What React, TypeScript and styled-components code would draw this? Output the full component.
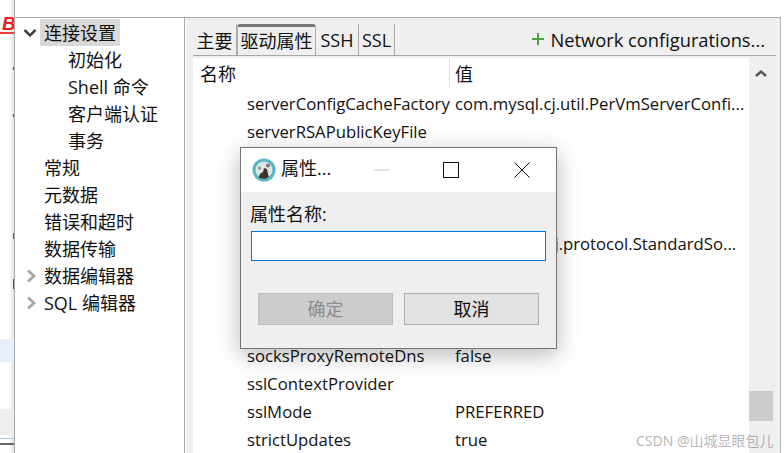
import React from "react";
import styled, { createGlobalStyle } from "styled-components";

const Global = createGlobalStyle`
  html, body { margin: 0; padding: 0; background: #fff; }
  body { font-family: "Open Sans", "Noto Sans CJK SC", sans-serif; color: #111; }
`;
const cjk = `"Open Sans", "Noto Sans CJK SC", sans-serif`;

const Page = styled.div`
  position: relative; width: 784px; height: 453px; overflow: hidden;
  display: flex; background: #fff; font-family: ${cjk}; font-size: 17px;
`;
const Strip = styled.div`
  width: 14px; flex: none; display: flex; flex-direction: column; overflow: hidden;
  background: linear-gradient(90deg, #fff 0 9px, #e4e4e4 14px);
`;
const BrandMark = styled.div`
  margin-top: 15px; height: 19px; width: 14px; overflow: hidden; box-sizing: border-box;
  border-bottom: 2px solid #f03a3a; color: #f02020; font: italic bold 19px/18px "Liberation Sans", sans-serif;
  padding-left: 2px;
`;
const Dot = styled.div<{ $top: number; $h?: number }>`
  margin-top: ${p => p.$top}px; margin-left: 13px; width: 2px; height: ${p => p.$h ?? 3}px;
  background: #8a4a20; flex: none;
`;
const Hl = styled.div`
  margin-top: 50px; height: 23px; background: #e5effa; flex: none;
`;
const GrayBand = styled.div`
  margin-top: 47px; height: 26px; background: #eeeeee; flex: none;
`;
const BlueLine = styled.div`
  margin-top: 3px; height: 1px; background: #a9c4e6; flex: none;
`;
const DarkLine = styled.div`
  margin-top: 4px; height: 2px; background: #666; flex: none;
`;
const Window = styled.div`
  flex: 1; display: flex; flex-direction: column; min-width: 0;
  border-left: 1px solid #a8a8a8;
`;
const TopBar = styled.div`
  height: 17px; flex: none; background: #fff; margin-right: 3px;
  border-bottom: 1px solid #a6a6a6;
`;
const Body = styled.div`
  flex: 1; display: flex; min-height: 0; margin-right: 3px; border-right: 1px solid #b4b4b4;
`;
const Tree = styled.div`
  width: 170px; flex: none; box-sizing: border-box; padding-top: 1px; background: #fff;
  border-right: 1px solid #a8a8a8; display: flex; flex-direction: column;
`;
const TreeRow = styled.div`
  height: 27px; display: flex; align-items: center; flex: none; padding-left: 8px;
`;
const Twisty = styled.span`
  width: 17px; flex: none; display: flex; align-items: center; justify-content: flex-start;
`;
const TreeLabel = styled.span<{ $selected?: boolean; $indent?: boolean }>`
  height: 27px; line-height: 28px; white-space: nowrap; font-size: 18px;
  margin-left: ${p => (p.$indent ? 24 : 0)}px;
  padding: 0 4px;
  ${p => (p.$selected ? "background: #d9d9d9;" : "")}
`;
const Panel = styled.div`
  flex: 1; min-width: 0; background: #efefef; display: flex; flex-direction: column;
  padding-left: 7px; margin-left: 1px;
`;
const Tabs = styled.div`
  height: 38px; flex: none; display: flex; align-items: flex-end; box-sizing: border-box;
  border-bottom: 1px solid #a9a9a9; margin-right: 4px;
`;
const Tab = styled.div<{ $active?: boolean; $w: number }>`
  width: ${p => p.$w}px; height: 31px; box-sizing: border-box; flex: none;
  display: flex; align-items: center; justify-content: center; font-size: 18px;
  border-right: 1px solid #a9a9a9; white-space: nowrap;
  ${p => (p.$active ? "border-left: 1px solid #a9a9a9; border-top: 3px solid #777; border-radius: 3px 3px 0 0; padding-bottom: 2px;" : "")}
`;
const TabLink = styled.div`
  margin-left: auto; margin-right: 11px; display: flex; align-items: center; gap: 7px;
  height: 28px; margin-bottom: 2px; font-size: 18.3px; white-space: nowrap;
`;
const TableWrap = styled.div`
  margin-top: 2px; flex: 1; display: flex; min-height: 0;
`;
const Table = styled.div`
  width: 556px; flex: none; background: #fff; overflow: hidden;
`;
const Head = styled.div`
  display: grid; grid-template-columns: 256px 1fr; height: 31px;
`;
const HeadCell = styled.div`
  font-size: 18px; line-height: 32px; padding-left: 7px; box-sizing: border-box; height: 30px;
  & + & { border-left: 1px solid #e2e2e2; padding-left: 5px; }
`;
const Row = styled.div`
  display: grid; grid-template-columns: 54px 208px 1fr; height: 28px; align-items: center;
  font-size: 16.7px; white-space: nowrap;
`;
const Value = styled.span<{ $nudge?: number }>`
  margin-left: ${p => p.$nudge ?? 0}px;
`;
const Scroll = styled.div`
  flex: 1; position: relative; display: flex; flex-direction: column; align-items: flex-start;
`;
const ScrollUp = styled.div`
  width: 24px; height: 30px; display: flex; align-items: center; justify-content: center;
`;
const Thumb = styled.div`
  margin-top: 303px; width: 24px; height: 30px; background: #cccccc;
`;
const Dialog = styled.div`
  position: absolute; left: 240px; top: 147px; width: 317px; height: 202px; box-sizing: border-box;
  border: 1px solid #747474; background: #efefef; display: flex; flex-direction: column;
  box-shadow: 0 6px 22px rgba(0,0,0,.28);
`;
const TitleBar = styled.div`
  height: 44px; flex: none; background: #fff; display: flex; align-items: center; padding-left: 11px;
`;
const TitleText = styled.span`
  font-size: 18px; line-height: 40px; height: 44px; margin-left: 5px; width: 92px; white-space: nowrap;
`;
const WinBtn = styled.div<{ $w: number }>`
  width: ${p => p.$w}px; flex: none; display: flex; align-items: center; justify-content: center;
`;
const DialogBody = styled.div`
  flex: 1; padding: 9px 10px 0; display: flex; flex-direction: column;
`;
const FieldLabel = styled.div`
  font-size: 18px; line-height: 27px; height: 30px; margin-left: -1px;
`;
const Input = styled.div`
  height: 30px; width: 295px; box-sizing: border-box; background: #fff; border: 1px solid #0078d7;
`;
const Buttons = styled.div`
  margin-top: 32px; margin-left: 7px; display: flex; gap: 11px;
`;
const Btn = styled.div<{ $disabled?: boolean }>`
  width: 135px; height: 32px; box-sizing: border-box; display: flex; align-items: center; justify-content: center;
  font-size: 18px; padding-bottom: 2px;
  ${p => (p.$disabled
    ? "background:#cccccc; border:1px solid #bfbfbf; color:#8d8d8d;"
    : "background:#e1e2e3; border:1px solid #adadad; color:#111;")}
`;
const Watermark = styled.div`
  position: absolute; left: 636px; top: 431px; font-size: 14px; line-height: 19px; color: rgba(120,120,120,.55);
  white-space: nowrap; font-family: "Noto Sans", "Noto Sans CJK SC", sans-serif;
`;

const Down = () => (
  <svg width="14" height="10" viewBox="0 0 14 10"><path d="M1.5 2 7 7.5 12.5 2" fill="none" stroke="#444" strokeWidth="2.6" /></svg>
);
const Right = () => (
  <svg width="12" height="14" viewBox="0 0 12 14" style={{ marginLeft: 2 }}><path d="M3 1.5 9 7 3 12.5" fill="none" stroke="#a6a6a6" strokeWidth="2.8" /></svg>
);
const Up = () => (
  <svg width="12" height="9" viewBox="0 0 12 9"><path d="M1 7 6 2.5 11 7" fill="none" stroke="#555" strokeWidth="2.4" /></svg>
);
const Plus = () => (
  <svg width="12" height="12" viewBox="0 0 12 12"><path d="M6 0v12M0 6h12" stroke="#4d9f42" strokeWidth="2" /></svg>
);
const AppIcon = () => (
  <svg width="24" height="24" viewBox="0 0 24 24">
    <circle cx="12" cy="12" r="11.5" fill="#55b8c2" />
    <circle cx="12" cy="12" r="8.5" fill="#dfe6e6" />
    <path d="M7 20c0-4 2-5 4-6l1-4 3 1 1 5 1 3-4 2z" fill="#3c3430" />
    <circle cx="16" cy="7.5" r="2" fill="#777" />
    <circle cx="7.5" cy="10" r="1.6" fill="#8a8a8a" />
  </svg>
);

const tree: { label: string; indent?: boolean; twisty?: "down" | "right"; selected?: boolean }[] = [
  { label: "连接设置", twisty: "down", selected: true },
  { label: "初始化", indent: true },
  { label: "Shell 命令", indent: true },
  { label: "客户端认证", indent: true },
  { label: "事务", indent: true },
  { label: "常规" },
  { label: "元数据" },
  { label: "错误和超时" },
  { label: "数据传输" },
  { label: "数据编辑器", twisty: "right" },
  { label: "SQL 编辑器", twisty: "right" },
];

const rows: [string, string, number?][] = [
  ["serverConfigCacheFactory", "com.mysql.cj.util.PerVmServerConfi..."],
  ["serverRSAPublicKeyFile", ""],
  ["serverTimezone", ""],
  ["sessionVariables", ""],
  ["slowQueryThresholdMillis", ""],
  ["socketFactory", "com.mysql.cj.protocol.StandardSo...", 3],
  ["socketTimeout", ""],
  ["socksProxyHost", ""],
  ["socksProxyPort", ""],
  ["socksProxyRemoteDns", "false"],
  ["sslContextProvider", ""],
  ["sslMode", "PREFERRED"],
  ["strictUpdates", "true"],
];

export default function App() {
  return (
    <Page>
      <Global />
      <Strip>
        <BrandMark>B</BrandMark>
        <Dot $top={33} />
        <Dot $top={44} />
        <Dot $top={116} $h={6} />
        <Dot $top={40} $h={10} />
        <Hl />
        <GrayBand />
        <BlueLine />
        <DarkLine />
      </Strip>
      <Window>
        <TopBar />
        <Body>
          <Tree>
            {tree.map(t => (
              <TreeRow key={t.label}>
                <Twisty>{t.twisty === "down" ? <Down /> : t.twisty === "right" ? <Right /> : null}</Twisty>
                <TreeLabel $selected={t.selected} $indent={t.indent}>{t.label}</TreeLabel>
              </TreeRow>
            ))}
          </Tree>
          <Panel>
            <Tabs>
              <Tab $w={44}>主要</Tab>
              <Tab $active $w={79}>驱动属性</Tab>
              <Tab $w={43}>SSH</Tab>
              <Tab $w={36}>SSL</Tab>
              <TabLink><Plus />Network configurations...</TabLink>
            </Tabs>
            <TableWrap>
              <Table>
                <Head>
                  <HeadCell>名称</HeadCell>
                  <HeadCell>值</HeadCell>
                </Head>
                {rows.map(([k, v, n]) => (
                  <Row key={k}>
                    <span />
                    <span>{k}</span>
                    <Value $nudge={n}>{v}</Value>
                  </Row>
                ))}
              </Table>
              <Scroll>
                <ScrollUp><Up /></ScrollUp>
                <Thumb />
              </Scroll>
            </TableWrap>
          </Panel>
        </Body>
      </Window>
      <Dialog>
        <TitleBar>
          <AppIcon />
          <TitleText>属性...</TitleText>
          <WinBtn $w={16}><svg width="15" height="2" viewBox="0 0 15 2"><path d="M0 1h15" stroke="#c8c8c8" /></svg></WinBtn>
          <WinBtn $w={124}><svg width="16" height="16" viewBox="0 0 16 16"><rect x=".5" y=".5" width="15" height="15" fill="none" stroke="#111" /></svg></WinBtn>
          <WinBtn $w={18}><svg width="16" height="16" viewBox="0 0 16 16"><path d="M.5.5l15 15M15.5.5l-15 15" stroke="#111" /></svg></WinBtn>
        </TitleBar>
        <DialogBody>
          <FieldLabel>属性名称:</FieldLabel>
          <Input />
          <Buttons>
            <Btn $disabled>确定</Btn>
            <Btn>取消</Btn>
          </Buttons>
        </DialogBody>
      </Dialog>
      <Watermark>CSDN @山城显眼包儿</Watermark>
    </Page>
  );
}
